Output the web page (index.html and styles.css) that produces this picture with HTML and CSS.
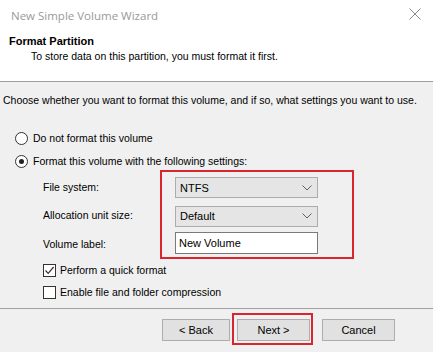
FILE: index.html
```html
<!DOCTYPE html>
<html>
<head>
<meta charset="utf-8">
<link rel="stylesheet" href="styles.css">
</head>
<body>
<div class="win">
  <div class="header">
    <div class="titlebar">
      <span class="title">New Simple Volume Wizard</span>
      <svg class="close" width="12" height="12" viewBox="0 0 12 12"><path d="M0.5 0.5 L11.5 11.5 M11.5 0.5 L0.5 11.5" stroke="#8a8a8a" stroke-width="1" fill="none"/></svg>
    </div>
    <div class="head-title">Format Partition</div>
    <div class="head-sub">To store data on this partition, you must format it first.</div>
  </div>
  <div class="body">
    <div class="intro">Choose whether you want to format this volume, and if so, what settings you want to use.</div>
    <div class="option opt1"><span class="radio"></span><span>Do not format this volume</span></div>
    <div class="option opt2"><span class="radio on"></span><span>Format this volume with the following settings:</span></div>
    <div class="fields">
      <div class="label l1">File system:</div>
      <div class="select s1"><span>NTFS</span><svg width="10" height="6" viewBox="0 0 10 6"><path d="M0.5 0.5 L5 5 L9.5 0.5" stroke="#606060" fill="none"/></svg></div>
      <div class="label l2">Allocation unit size:</div>
      <div class="select s2"><span>Default</span><svg width="10" height="6" viewBox="0 0 10 6"><path d="M0.5 0.5 L5 5 L9.5 0.5" stroke="#606060" fill="none"/></svg></div>
      <div class="label l3">Volume label:</div>
      <div class="textbox">New Volume</div>
      <div class="redbox fieldbox"></div>
    </div>
    <div class="check c1"><span class="box"><svg width="11" height="11" viewBox="0 0 11 11"><path d="M1.5 5.5 L4.2 8.3 L9.6 2" stroke="#333" stroke-width="1.2" fill="none"/></svg></span><span>Perform a quick format</span></div>
    <div class="check c2"><span class="box"></span><span>Enable file and folder compression</span></div>
  </div>
  <div class="footer">
    <div class="btn back">&lt; Back</div>
    <div class="btn next">Next &gt;</div>
    <div class="btn cancel">Cancel</div>
    <div class="redbox nextbox"></div>
  </div>
</div>
</body>
</html>
```
FILE: styles.css
```css
html, body { margin: 0; padding: 0; }
body {
  width: 433px;
  height: 352px;
  background: #f0f0f0;
  font-family: "Liberation Sans", Arial, sans-serif;
  font-size: 10.5px;
  color: #000;
  overflow: hidden;
  white-space: nowrap;
}
.win { position: relative; width: 433px; height: 352px; }
.header {
  background: #fff;
  height: 82px;
  border-bottom: 1px solid #a0a0a0;
  box-sizing: border-box;
}
.titlebar {
  height: 30px;
  display: flex;
  align-items: center;
  justify-content: space-between;
  padding: 0 12px 0 11px;
}
.title {
  font-family: "Open Sans", sans-serif;
  font-size: 11.5px;
  color: #999;
}
.close { margin-top: -2px; }
.head-title {
  font-weight: bold;
  padding-left: 9px;
  line-height: 15px;
  margin-top: 4px;
  font-size: 11px;
}
.head-sub {
  padding-left: 31px;
  line-height: 15px;
}
.body {
  height: 226px;
  box-sizing: border-box;
  padding-top: 11px;
}
.intro {
  padding-left: 3px;
  line-height: 15px;
}
.option {
  display: flex;
  align-items: center;
  gap: 5px;
  padding-left: 15px;
  height: 15px;
  line-height: 15px;
}
.opt1 { margin-top: 23px; }
.opt2 { margin-top: 8px; }
.radio {
  width: 11px; height: 11px;
  border: 1px solid #333;
  border-radius: 50%;
  background: #fff;
  position: relative;
  flex: none;
}
.radio.on::after {
  content: "";
  position: absolute;
  left: 3px; top: 3px;
  width: 5px; height: 5px;
  border-radius: 50%;
  background: #222;
}
.fields {
  position: relative;
  display: grid;
  grid-template-columns: 132px 143px;
  grid-template-rows: 21px 21px 22px;
  row-gap: 7px;
  padding-left: 43px;
  margin-top: 8px;
  align-items: center;
}
.fields .s2 { margin-top: 1px; }
.fields .textbox { margin-top: -2px; }
.label { line-height: 15px; }
.select {
  height: 21px;
  box-sizing: border-box;
  background: #e5e5e5;
  border: 1px solid #acacac;
  display: flex;
  align-items: center;
  justify-content: space-between;
  padding: 0 4px 0 4px;
  font-size: 11px;
}
.select svg { margin-right: 1px; }
.textbox {
  height: 22px;
  box-sizing: border-box;
  background: #fff;
  border: 1px solid #7a7a7a;
  display: flex;
  align-items: center;
  padding-left: 3px;
  font-size: 11px;
}
.redbox {
  position: absolute;
  border: 2px solid #d8252f;
  box-sizing: border-box;
}
.fieldbox { left: 160px; top: -7px; width: 194px; height: 89px; }
.check {
  display: flex;
  align-items: center;
  gap: 4px;
  padding-left: 43px;
  height: 15px;
  line-height: 15px;
}
.c1 { margin-top: 8px; }
.c2 { margin-top: 7px; }
.box {
  width: 11px; height: 11px;
  border: 1px solid #333;
  background: #fff;
  flex: none;
  display: flex;
}
.footer {
  position: relative;
  border-top: 1px solid #a0a0a0;
  display: flex;
  padding: 10px 0 0 162px;
  gap: 7px;
}
.btn {
  height: 22px;
  box-sizing: border-box;
  background: #e1e1e1;
  border: 1px solid #adadad;
  display: flex;
  align-items: center;
  justify-content: center;
  font-size: 11px;
}
.back { width: 68px; }
.next { width: 73px; }
.cancel { width: 73px; margin-left: 5px; }
.nextbox { left: 232px; top: 4px; width: 81px; height: 32px; }
```
